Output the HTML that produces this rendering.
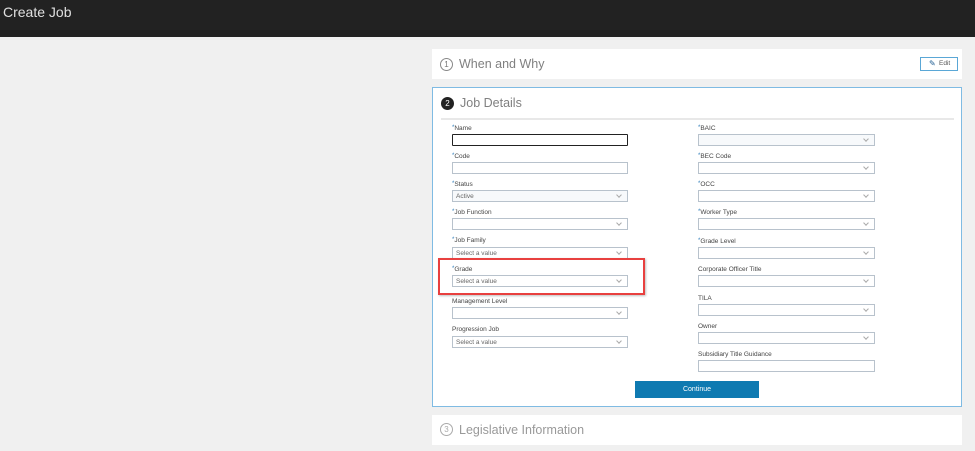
<!DOCTYPE html>
<html><head><meta charset="utf-8"><style>
*{margin:0;padding:0;box-sizing:border-box}
body{width:975px;height:451px;background:#f0f0f0;font-family:"Liberation Sans",sans-serif;position:relative;overflow:hidden}
.top{position:absolute;left:0;top:0;width:975px;height:37px;background:#222}
.top span{position:absolute;left:3px;top:4px;color:#e0e0e0;font-size:14px}
.p{position:absolute;left:432px;width:530px;background:#fff}
.c{position:absolute;width:13px;height:13px;border-radius:50%;border:1px solid #888;font-size:8px;color:#777;text-align:center;line-height:11px}
.h{position:absolute;font-size:12.5px;color:#808080}
.l{position:absolute;font-size:6.5px;color:#444}
.l b{color:#2a7ab8;font-weight:normal;font-size:6px;vertical-align:top}
.i{position:absolute;height:12px;border:1px solid #b8c2cc;background:#fff;font-size:6.5px;color:#666;padding-left:3px;line-height:11px}
.i.s::after{content:"";position:absolute;right:6px;top:2px;width:3px;height:3px;border-right:1px solid #aaa;border-bottom:1px solid #aaa;transform:rotate(45deg)}
.L{left:452px;width:176px}.R{left:698px;width:177px}
</style></head><body>
<div class="top"><span>Create Job</span></div>
<div class="p" style="top:49px;height:30px">
<div class="c" style="left:8px;top:9px">1</div><div class="h" style="left:27px;top:8px">When and Why</div>
<div style="position:absolute;left:488px;top:8px;width:38px;height:14px;border:1px solid #5aa7d6;font-size:6.5px;color:#555;line-height:12px;padding-left:18px"><span style="position:absolute;left:8px;top:0;color:#1a5a90;font-size:8px">✎</span>Edit</div>
</div>
<div class="p" style="top:87px;height:320px;border:1px solid #7fbbe3">
<div class="c" style="left:8px;top:9px;background:#222;border-color:#222;color:#fff">2</div><div class="h" style="left:27px;top:8px">Job Details</div>
<div style="position:absolute;left:8px;top:30px;width:513px;height:2px;background:#e8e8e8"></div>
</div>
<div class="l" style="left:452px;top:125px"><b>*</b>Name</div><div class="i L" style="top:134px;border:1.5px solid #222;border-radius:1px"></div>
<div class="l" style="left:452px;top:153px"><b>*</b>Code</div><div class="i L" style="top:162px"></div>
<div class="l" style="left:452px;top:181px"><b>*</b>Status</div><div class="i L s" style="top:190px;background:#f7f9fb">Active</div>
<div class="l" style="left:452px;top:209px"><b>*</b>Job Function</div><div class="i L s" style="top:218px"></div>
<div class="l" style="left:452px;top:237px"><b>*</b>Job Family</div><div class="i L s" style="top:247px">Select a value</div>
<div class="l" style="left:452px;top:266px"><b>*</b>Grade</div><div class="i L s" style="top:275px">Select a value</div>
<div class="l" style="left:452px;top:298px">Management Level</div><div class="i L s" style="top:307px"></div>
<div class="l" style="left:452px;top:326px">Progression Job</div><div class="i L s" style="top:336px">Select a value</div>
<div style="position:absolute;left:438px;top:258px;width:207px;height:37px;border:2px solid #e8403f;box-shadow:1px 1px 2px rgba(0,0,0,.25)"></div>

<div class="l" style="left:698px;top:125px"><b>*</b>BAIC</div><div class="i R s" style="top:134px;background:#f7f9fb"></div>
<div class="l" style="left:698px;top:153px"><b>*</b>BEC Code</div><div class="i R s" style="top:162px"></div>
<div class="l" style="left:698px;top:181px"><b>*</b>OCC</div><div class="i R s" style="top:190px"></div>
<div class="l" style="left:698px;top:209px"><b>*</b>Worker Type</div><div class="i R s" style="top:218px"></div>
<div class="l" style="left:698px;top:238px"><b>*</b>Grade Level</div><div class="i R s" style="top:247px"></div>
<div class="l" style="left:698px;top:266px">Corporate Officer Title</div><div class="i R s" style="top:275px"></div>
<div class="l" style="left:698px;top:295px">TILA</div><div class="i R s" style="top:304px"></div>
<div class="l" style="left:698px;top:323px">Owner</div><div class="i R s" style="top:332px"></div>
<div class="l" style="left:698px;top:351px">Subsidiary Title Guidance</div><div class="i R" style="top:360px"></div>
<div style="position:absolute;left:635px;top:381px;width:124px;height:17px;background:#0f7ab1;color:#fff;font-size:7px;text-align:center;line-height:17px">Continue</div>
<div class="p" style="top:415px;height:30px">
<div class="c" style="left:8px;top:8px;color:#aaa;border-color:#aaa">3</div><div class="h" style="left:27px;top:8px;color:#999">Legislative Information</div>
</div>
</body></html>
